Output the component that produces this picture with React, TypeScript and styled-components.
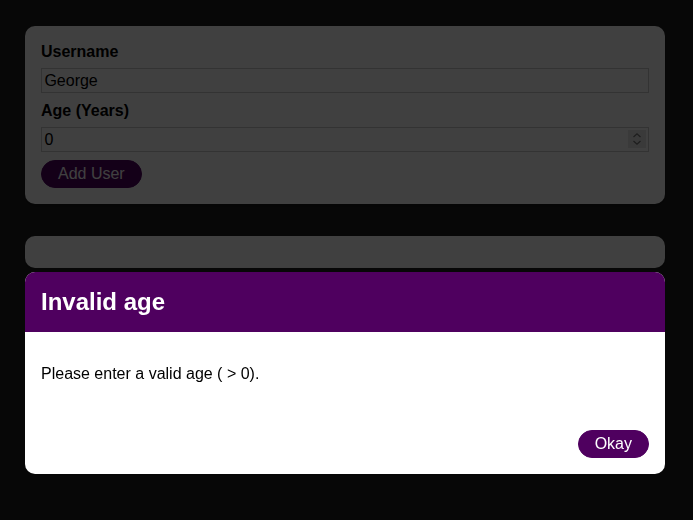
import { useState } from "react";
import styled, { createGlobalStyle } from "styled-components";

const GlobalStyle = createGlobalStyle`
  * {
    box-sizing: border-box;
  }
  html {
    font-family: "Liberation Sans", Arial, sans-serif;
  }
  body {
    margin: 0;
    background: #1f1f1f;
  }
`;

const Page = styled.div`
  padding: 26px 0 0 25px;
`;

const Card = styled.div`
  background: white;
  border-radius: 10px;
  box-shadow: 0 2px 8px rgba(0, 0, 0, 0.26);
  width: 640px;
`;

const Form = styled(Card).attrs({ as: "form" })`
  padding: 16px;
  margin-bottom: 32px;
`;

const Label = styled.label`
  display: block;
  font-weight: bold;
  font-size: 16px;
  padding-top: 1px;
  margin-bottom: 7px;
`;

const Field = styled.div`
  position: relative;
  margin-bottom: 8px;
`;

const Input = styled.input`
  font: inherit;
  font-size: 16px;
  display: block;
  width: 100%;
  border: 1px solid #ccc;
  padding: 3px 2.4px 1.8px;
  &:focus {
    outline: none;
    border-color: #4f005f;
  }
  &::-webkit-inner-spin-button,
  &::-webkit-outer-spin-button {
    -webkit-appearance: none;
    margin: 0;
  }
`;

// the spin box the browser shows on a hovered number field
const Spinner = styled.span`
  position: absolute;
  top: 3px;
  right: 3px;
  width: 18px;
  height: 18px;
  background: #e8e8e8;
  display: flex;
  align-items: center;
  justify-content: center;
  pointer-events: none;
`;

const Button = styled.button`
  font: inherit;
  font-size: 16px;
  border: 1px solid #4f005f;
  background: #4f005f;
  color: white;
  padding: 4px 16px;
  border-radius: 14px;
  cursor: pointer;
`;

const UserList = styled(Card).attrs({ as: "ul" })`
  list-style: none;
  margin: 0;
  padding: 16px;
`;

const Backdrop = styled.div`
  position: fixed;
  inset: 0;
  z-index: 10;
  background: rgba(0, 0, 0, 0.75);
`;

const Modal = styled(Card)`
  position: fixed;
  top: 272px;
  left: 25px;
  z-index: 100;
  overflow: hidden;
`;

const ModalHeader = styled.header`
  background: #4f005f;
  padding: 16px;
  h2 {
    margin: 0;
    color: white;
    font-size: 24px;
  }
`;

const ModalContent = styled.div`
  padding: 16px;
  p {
    margin: 17px 0 15px;
    font-size: 16px;
  }
`;

const ModalActions = styled.footer`
  padding: 16px;
  display: flex;
  justify-content: flex-end;
`;

function App() {
  const [name, setName] = useState("George");
  const [age, setAge] = useState("0");
  const [error, setError] = useState(true);

  return (
    <>
      <GlobalStyle />
      <Page>
        <Form onSubmit={(e: React.FormEvent) => { e.preventDefault(); setError(true); }}>
          <Label htmlFor="username">Username</Label>
          <Field>
            <Input id="username" type="text" value={name} onChange={(e) => setName(e.target.value)} />
          </Field>
          <Label htmlFor="age">Age (Years)</Label>
          <Field>
            <Input id="age" type="number" value={age} onChange={(e) => setAge(e.target.value)} />
            <Spinner>
              <svg width="10" height="14" viewBox="0 0 10 14" fill="none" stroke="#777" strokeWidth="1.3">
                <path d="M1.5 5 L5 1.8 L8.5 5" />
                <path d="M1.5 9 L5 12.2 L8.5 9" />
              </svg>
            </Spinner>
          </Field>
          <Button type="submit">Add User</Button>
        </Form>
        <UserList />
      </Page>
      {error && (
        <>
          <Backdrop onClick={() => setError(false)} />
          <Modal>
            <ModalHeader>
              <h2>Invalid age</h2>
            </ModalHeader>
            <ModalContent>
              <p>Please enter a valid age ( &gt; 0).</p>
            </ModalContent>
            <ModalActions>
              <Button onClick={() => setError(false)}>Okay</Button>
            </ModalActions>
          </Modal>
        </>
      )}
    </>
  );
}

export default App;
